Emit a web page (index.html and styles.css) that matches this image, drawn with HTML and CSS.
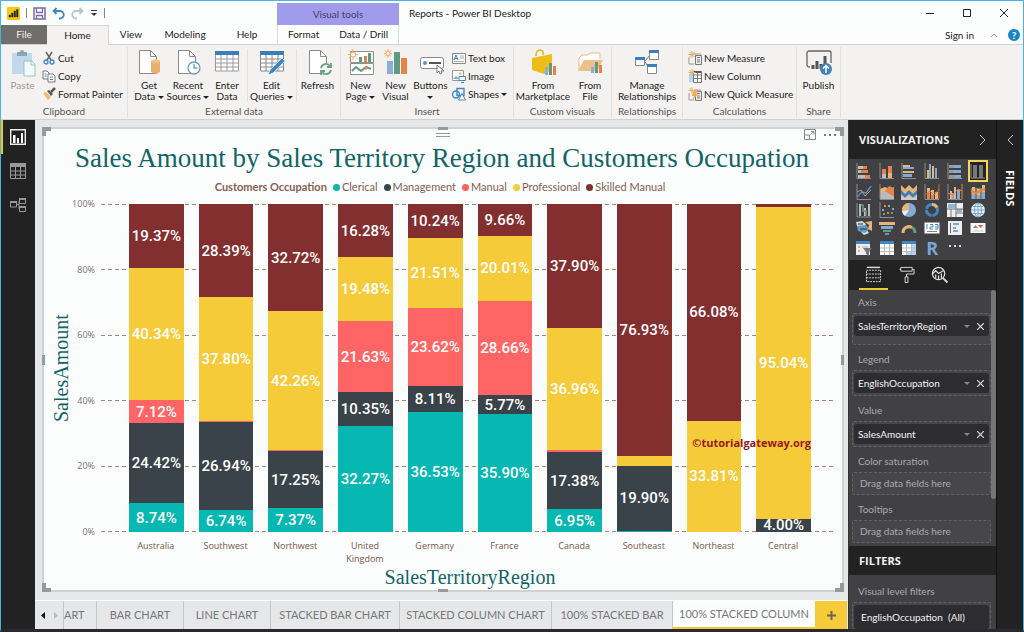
FILE: index.html
```html
<!DOCTYPE html>
<html lang="en">
<head>
<meta charset="utf-8">
<title>Reports - Power BI Desktop</title>
<link rel="stylesheet" href="styles.css">
</head>
<body>
<div class="app">
  <header class="top">
    <div class="quick">
      <svg class="logo" viewBox="0 0 13 13"><rect width="13" height="13" rx="1" fill="#f2c811"/><path d="M2 10V8h1.500v2zM4.500 10V6H6v4zM7 10V4h1.500v6zM9.500 10V2.500H11V10z" fill="#222" stroke="#222" stroke-width=".4"/></svg>
      <span class="bar"></span>
      <button class="plain" aria-label="Save"><svg width="13" height="13" viewBox="0 0 13 13"><path d="M1 1h11v11H1z" fill="#fff" stroke="#7b68a8" stroke-width="1.500"/><path d="M3.500 1v4.500h6V1M3.500 12V8.500h6V12" fill="none" stroke="#7b68a8" stroke-width="1.300"/></svg></button>
      <button class="plain" aria-label="Undo"><svg width="13" height="13" viewBox="0 0 13 13"><path d="M4.500 1L1.500 4l3 3M1.500 4H8a3.500 3.500 0 0 1 0 7.500H7" fill="none" stroke="#3f86c4" stroke-width="1.800"/></svg></button>
      <button class="plain" aria-label="Redo"><svg width="13" height="13" viewBox="0 0 13 13"><path d="M8.500 1l3 3-3 3M11.500 4H5a3.500 3.500 0 0 0 0 7.500h1" fill="none" stroke="#b4c8cf" stroke-width="1.800"/></svg></button>
      <button class="plain" aria-label="Customize toolbar"><svg width="8" height="8" viewBox="0 0 8 8"><path d="M1 1.500h6" stroke="#333"/><path d="M1 4h6L4 7z" fill="#333"/></svg></button>
      <span class="bar"></span>
    </div>
    <div class="context">Visual tools</div>
    <h1 class="wintitle">Reports - Power BI Desktop</h1>
    <div class="winbtns">
      <button class="plain" aria-label="Minimize"><svg width="10" height="10" viewBox="0 0 10 10"><path d="M1 5.500h8" stroke="#222"/></svg></button>
      <button class="plain" aria-label="Maximize"><svg width="10" height="10" viewBox="0 0 10 10"><path d="M1.500 1.500h7v7h-7z" fill="none" stroke="#222"/></svg></button>
      <button class="plain" aria-label="Close"><svg width="10" height="10" viewBox="0 0 10 10"><path d="M1 1l8 8M9 1l-8 8" stroke="#222"/></svg></button>
    </div>
  </header>

  <nav class="tabs">
    <button class="tab file">File</button>
    <button class="tab home">Home</button>
    <button class="tab view">View</button>
    <button class="tab modeling">Modeling</button>
    <button class="tab help">Help</button>
    <div class="ctxtabs"><button class="tab">Format</button><button class="tab">Data / Drill</button></div>
    <div class="account">
      <button class="plain">Sign in</button>
      <svg width="8" height="6" viewBox="0 0 8 6"><path d="M1 5l3-3 3 3" fill="none" stroke="#999"/></svg>
      <button class="qmark" aria-label="Help center">?</button>
    </div>
  </nav>

  <section class="ribbon">
    <div class="group g-clip">
      <div class="tools">
        <button class="big paste"><svg viewBox="0 0 28 28"><path d="M3 4h20v21H3z" fill="#c3d8ec"/><path d="M8 3h3a2 2 0 0 1 4 0h3v4H8z" fill="#8ba5b4"/><path d="M15 12h8l3 3v12H15z" fill="#f1fbfa" stroke="#9cc5bd"/><path d="M22 12v4h4" fill="none" stroke="#9cc5bd"/></svg><span>Paste</span></button>
        <div class="stack">
          <button class="small"><svg viewBox="0 0 14 14"><path d="M4 1l5 8M10 1L5 9" stroke="#666" stroke-width="1.500"/><circle cx="4" cy="11" r="2" fill="none" stroke="#3f86c4" stroke-width="1.300"/><circle cx="10" cy="11" r="2" fill="none" stroke="#3f86c4" stroke-width="1.300"/></svg>Cut</button>
          <button class="small"><svg viewBox="0 0 14 14"><path d="M1 2h4l2 2v6H1z" fill="#fff" stroke="#777"/><path d="M6 5h5l2 2v6H6z" fill="#fff" stroke="#777"/><path d="M2.500 5h2M2.500 7h2M8 8h3M8 10.500h3" stroke="#3f86c4"/></svg>Copy</button>
          <button class="small"><svg viewBox="0 0 14 14"><path d="M1 6l3-1 5 5-3 3z" fill="#eeb978"/><path d="M5 4l2-1 4 4-2 2z" fill="#555"/><path d="M9 5l4-4" stroke="#555" stroke-width="2.500"/></svg>Format Painter</button>
        </div>
      </div>
      <div class="gname">Clipboard</div>
    </div>
    <div class="group g-ext">
      <div class="tools">
        <button class="big"><svg viewBox="0 0 28 28"><path d="M4.500 1.500h11l6 6v17h-17z" fill="#fff" stroke="#8a8a8a"/><path d="M15.500 1.500v6h6" fill="none" stroke="#8a8a8a"/><path d="M16 12v11q4.500 3 9 0V12z" fill="#e8b06c"/><ellipse cx="20.500" cy="12" rx="4.500" ry="1.800" fill="#f1c48c"/></svg><span>Get<br>Data <i class="dd"></i></span></button>
        <button class="big"><svg viewBox="0 0 28 28"><path d="M4.500 1.500h11l6 6v17h-17z" fill="#fff" stroke="#8a8a8a"/><path d="M15.500 1.500v6h6" fill="none" stroke="#8a8a8a"/><circle cx="20" cy="19" r="6" fill="#fff" stroke="#6a9ccc" stroke-width="1.300"/><path d="M20 15v4h3.500" fill="none" stroke="#6a9ccc" stroke-width="1.300"/></svg><span>Recent<br>Sources <i class="dd"></i></span></button>
        <button class="big"><svg viewBox="0 0 28 28"><path d="M2.500 4v18h23V4M2.500 10h23M2.500 14h23M2.500 18h23M8 6v16M14 6v16M20 6v16" fill="#fff" stroke="#9a9a9a"/><path d="M2 2h24v4H2z" fill="#3b7fba"/></svg><span>Enter<br>Data</span></button>
        <button class="big sep"><svg viewBox="0 0 28 28"><path d="M2.500 4v18h23V4M2.500 10h23M2.500 14h23M2.500 18h23M8 6v16M14 6v16M20 6v16" fill="#fff" stroke="#888"/><path d="M2 2h24v4H2z" fill="#3b7fba"/><path d="M10 26l2-5L24 9l3 3-12 12z" fill="#3f86c4" stroke="#fff" stroke-width=".6"/></svg><span>Edit<br>Queries <i class="dd"></i></span></button>
        <button class="big refresh"><svg viewBox="0 0 28 28"><path d="M5.500 1.500h11l6 6v17h-17z" fill="#fff" stroke="#8a8a8a"/><path d="M16.500 1.500v6h6" fill="none" stroke="#8a8a8a"/><circle cx="22" cy="20" r="6" fill="#f5f4f2"/><path d="M17 19a5 5 0 0 1 9-2M27 21a5 5 0 0 1-9 2M27 14v4h-4M17 26v-4h4" fill="none" stroke="#68a08c" stroke-width="1.800"/></svg><span>Refresh</span></button>
      </div>
      <div class="gname">External data</div>
    </div>
    <div class="group g-ins">
      <div class="tools">
        <button class="big"><svg viewBox="0 0 28 28"><path d="M3.500 2.500h23v11h-23zM3.500 14.500h23v11h-23z" fill="#fff" stroke="#909090"/><path d="M12 8h3v5h-3zM21 4h3v9h-3z" fill="#5c9c87"/><path d="M17 7h3v6h-3z" fill="#e48448"/><path d="M5 22l4-4 5 4 5-4 5 2" fill="none" stroke="#5c9c87" stroke-width="2"/><path d="M17 19l2-2 2 2-2 2z" fill="#e48448"/><path d="M6 0v11M1 5.500h10M2 1.500l8 8M10 1.500l-8 8" stroke="#edac5d"/><circle cx="6" cy="5.500" r="2.500" fill="#fff" stroke="#edac5d"/></svg><span>New<br>Page <i class="dd"></i></span></button>
        <button class="big"><svg viewBox="0 0 28 28"><path d="M5 12h6v13H5z" fill="#8badd6"/><path d="M12 3h6v22h-6z" fill="#5c9c87"/><path d="M19 9h6v16h-6z" fill="#e48448"/><path d="M6 0v9M2 4.500h8M3 1.500l6 6M9 1.500l-6 6" stroke="#edac5d"/><circle cx="6" cy="4.500" r="2" fill="#fff" stroke="#edac5d"/></svg><span>New<br>Visual</span></button>
        <button class="big"><svg viewBox="0 0 28 28"><rect x="3.500" y="8.500" width="23" height="11" rx="2" fill="#fff" stroke="#888"/><circle cx="8" cy="14" r="2" fill="#5d91cc"/><path d="M12 14h12" stroke="#555" stroke-width="2"/><path d="M20 16v8l2-2 1 3 2-1-1-2h3z" fill="#fff" stroke="#777"/></svg><span>Buttons<br><i class="dd"></i></span></button>
        <div class="stack">
          <button class="small"><svg viewBox="0 0 14 14"><path d="M.5 2.500h13v10H.5z" fill="#fff" stroke="#888"/><path d="M2 9l2-5 2 5M3 7.500h2" fill="none" stroke="#3f86c4"/><path d="M8 5h4M8 7h4M2 10.500h10" stroke="#aaa"/></svg>Text box</button>
          <button class="small"><svg viewBox="0 0 14 14"><path d="M.5 1.500h11v10H.5z" fill="#fff" stroke="#999"/><path d="M1 10l3-3 3 3z" fill="#7aaedb"/><circle cx="8" cy="4.500" r="1.300" fill="#f0b768"/><path d="M7 7.500h6.500v4H7zM9 13.500h3" fill="#fff" stroke="#3f86c4"/></svg>Image</button>
          <button class="small"><svg viewBox="0 0 14 14"><circle cx="4" cy="7.500" r="3.500" fill="none" stroke="#3f86c4" stroke-width="1.400"/><path d="M5 1.500h7v7H5z" fill="none" stroke="#3f86c4" stroke-width="1.400"/><path d="M10 6.500l3.500 6.500h-7z" fill="#fff" stroke="#3f86c4"/></svg>Shapes <i class="dd"></i></button>
        </div>
      </div>
      <div class="gname">Insert</div>
    </div>
    <div class="group g-cus">
      <div class="tools">
        <button class="big wide"><svg viewBox="0 0 28 28"><path d="M7 7q0-6 4-6t3 5" fill="none" stroke="#e4b21b" stroke-width="1.500"/><path d="M3 9l20-4v16l-8 4-12-4z" fill="#edbe15"/><path d="M16 18h3v8h-3z" fill="#8badd6"/><path d="M20 14h3v12h-3z" fill="#5c9c87"/><path d="M24 17h3v9h-3z" fill="#e48448"/></svg><span>From<br>Marketplace</span></button>
        <button class="big"><svg viewBox="0 0 28 28"><path d="M3 21V9l3-3h6l2-2h10v6" fill="#fff" stroke="#e8bb85"/><path d="M2 22l6-11h19l-6 11z" fill="#edbf89"/><path d="M15 18h3v6h-3z" fill="#8badd6"/><path d="M19 13h3v11h-3z" fill="#5c9c87"/><path d="M23 16h3v8h-3z" fill="#e48448"/></svg><span>From<br>File</span></button>
      </div>
      <div class="gname">Custom visuals</div>
    </div>
    <div class="group g-rel">
      <div class="tools">
        <button class="big wide"><svg viewBox="0 0 28 28"><path d="M12 12l5-6M12 13l4 6" stroke="#777"/><path d="M2.500 9.500h9v7h-9zM16.500 2.500h9v8h-9zM14.500 16.500h9v8h-9z" fill="#fff" stroke="#888"/><path d="M2 8h10v3H2zM16 1h10v3H16zM14 15h10v3H14z" fill="#3b7fba"/></svg><span>Manage<br>Relationships</span></button>
      </div>
      <div class="gname">Relationships</div>
    </div>
    <div class="group g-cal">
      <div class="tools">
        <div class="stack">
          <button class="small"><svg viewBox="0 0 14 14"><path d="M1 6v7h5M6 3h7" fill="none" stroke="#999"/><path d="M7.500 4.500h6v9h-6z" fill="#eee" stroke="#777"/><path d="M9 6.500h3M9 9h3M9 11h3" stroke="#777"/><path d="M4 0v7M.5 3.500h7M1.500 1l5 5M6.500 1l-5 5" stroke="#edac5d"/></svg>New Measure</button>
          <button class="small"><svg viewBox="0 0 14 14"><path d="M1 5h4v8H1z" fill="#b9d3ef"/><path d="M5.500 2.500h8v11h-8zM5.500 6h8M5.500 9.500h8M9.500 2.500v11" fill="#fff" stroke="#777"/><path d="M6 2h7v2H6z" fill="#555"/><path d="M4 0v7M.5 3.500h7M1.500 1l5 5M6.500 1l-5 5" stroke="#edac5d"/></svg>New Column</button>
          <button class="small"><svg viewBox="0 0 14 14"><path d="M1 6v7h5M6 3h7" fill="none" stroke="#999"/><path d="M7.500 4.500h6v9h-6z" fill="#eee" stroke="#777"/><path d="M9 6.500h3M9 9h3M9 11h3" stroke="#777"/><path d="M6 3h4L8 7h2l-6 7 2-5H4z" fill="#edac5d"/><path d="M4 0v7M.5 3.500h7M1.500 1l5 5" stroke="#edac5d"/></svg>New Quick Measure</button>
        </div>
      </div>
      <div class="gname">Calculations</div>
    </div>
    <div class="group g-sha">
      <div class="tools">
        <button class="big"><svg viewBox="0 0 28 28"><path d="M5 18H4a2 2 0 0 1-2-2V4a2 2 0 0 1 2-2h20a2 2 0 0 1 2 2v10" fill="none" stroke="#666" stroke-width="1.300"/><path d="M8 20v-4M12 20v-8M16 20v-5M20 17V7" stroke="#555" stroke-width="3"/><circle cx="21" cy="20" r="6" fill="#4381c0"/><path d="M21 24v-7M18 19.500l3-3 3 3" fill="none" stroke="#fff" stroke-width="1.500"/></svg><span>Publish</span></button>
      </div>
      <div class="gname">Share</div>
    </div>
  </section>

  <div class="work">
    <nav class="rail">
      <button class="railbtn on" aria-label="Report"><svg viewBox="0 0 16 16"><path d="M.7.700h14.600v14.600H.7z" fill="none" stroke="#eee" stroke-width="1.400"/><path d="M3 14V6h2.500v8zM7 14V9h2v5zM11 14V4h2v10z" fill="#fff"/></svg></button>
      <button class="railbtn" aria-label="Data"><svg viewBox="0 0 16 16"><path d="M.5.500h15v15H.5zM.5 8h15M.5 12h15M5.500 4v12M10.500 4v12" fill="none" stroke="#999"/><path d="M0 0h16v4H0z" fill="#999"/></svg></button>
      <button class="railbtn" aria-label="Relationships"><svg viewBox="0 0 16 16"><path d="M.5 5h6v5h-6zM9.500 1.500h6v5h-6zM9.500 9.500h6v5h-6zM7 7.500h2V4M7 7.500h2V12" fill="none" stroke="#999"/><path d="M0 4h7v2H0zM9 1h7v2H9zM9 9h7v2H9z" fill="#999"/></svg></button>
    </nav>

    <main class="center">
      <div class="canvas">
        <article class="visual">
          <i class="h tl"></i><i class="h tr"></i><i class="h bl"></i><i class="h br"></i><i class="h tm"></i><i class="h bm"></i><i class="h lm"></i><i class="h rm"></i>
          <i class="grip"></i>
          <div class="vtools">
            <button class="plain" aria-label="Focus mode"><svg width="12" height="11" viewBox="0 0 12 11"><path d="M.5.500h11v10H.5zM.5 6h5v4.500M6.500 5.500L10 2.500M7 2.500h3v3" fill="none" stroke="#8a8a8a"/></svg></button>
            <button class="plain" aria-label="More options"><svg width="14" height="4" viewBox="0 0 14 4"><path d="M1 1h2v2H1zM6 1h2v2H6zM11 1h2v2h-2z" fill="#777"/></svg></button>
          </div>
          <h2 class="ctitle">Sales Amount by Sales Territory Region and Customers Occupation</h2>
          <div class="legend"><b>Customers Occupation</b><span class="c1">Clerical</span><span class="c2">Management</span><span class="c3">Manual</span><span class="c4">Professional</span><span class="c5">Skilled Manual</span></div>
          <div class="chart">
            <div class="ytitle">SalesAmount</div>
            <div class="yaxis"><span>100%</span><span>80%</span><span>60%</span><span>40%</span><span>20%</span><span>0%</span></div>
            <div class="plot">
              <div class="lines"><i></i><i></i><i></i><i></i><i></i><i></i></div>
              <div class="col"><div class="s5" style="height:19.37%">19.37%</div><div class="s4" style="height:40.34%">40.34%</div><div class="s3" style="height:7.12%">7.12%</div><div class="s2" style="height:24.42%">24.42%</div><div class="s1" style="height:8.74%">8.74%</div></div>
              <div class="col"><div class="s5" style="height:28.39%">28.39%</div><div class="s4" style="height:37.8%">37.80%</div><div class="s3" style="height:.13%"></div><div class="s2" style="height:26.94%">26.94%</div><div class="s1" style="height:6.74%">6.74%</div></div>
              <div class="col"><div class="s5" style="height:32.72%">32.72%</div><div class="s4" style="height:42.26%">42.26%</div><div class="s3" style="height:.4%"></div><div class="s2" style="height:17.25%">17.25%</div><div class="s1" style="height:7.37%">7.37%</div></div>
              <div class="col"><div class="s5" style="height:16.28%">16.28%</div><div class="s4" style="height:19.48%">19.48%</div><div class="s3" style="height:21.63%">21.63%</div><div class="s2" style="height:10.35%">10.35%</div><div class="s1" style="height:32.27%">32.27%</div></div>
              <div class="col"><div class="s5" style="height:10.24%">10.24%</div><div class="s4" style="height:21.51%">21.51%</div><div class="s3" style="height:23.62%">23.62%</div><div class="s2" style="height:8.11%">8.11%</div><div class="s1" style="height:36.53%">36.53%</div></div>
              <div class="col"><div class="s5" style="height:9.66%">9.66%</div><div class="s4" style="height:20.01%">20.01%</div><div class="s3" style="height:28.66%">28.66%</div><div class="s2" style="height:5.77%">5.77%</div><div class="s1" style="height:35.9%">35.90%</div></div>
              <div class="col"><div class="s5" style="height:37.9%">37.90%</div><div class="s4" style="height:36.96%">36.96%</div><div class="s3" style="height:.81%"></div><div class="s2" style="height:17.38%">17.38%</div><div class="s1" style="height:6.95%">6.95%</div></div>
              <div class="col"><div class="s5" style="height:76.93%">76.93%</div><div class="s4" style="height:2.87%"></div><div class="s2" style="height:19.9%">19.90%</div><div class="s1" style="height:.3%"></div></div>
              <div class="col"><div class="s5" style="height:66.08%">66.08%</div><div class="s4" style="height:33.92%">33.81%</div></div>
              <div class="col"><div class="s5" style="height:.96%"></div><div class="s4" style="height:95.04%">95.04%</div><div class="s2" style="height:4%">4.00%</div></div>
              <div class="mark">©tutorialgateway.org</div>
            </div>
            <div class="xaxis"><span>Australia</span><span>Southwest</span><span>Northwest</span><span>United Kingdom</span><span>Germany</span><span>France</span><span>Canada</span><span>Southeast</span><span>Northeast</span><span>Central</span></div>
          </div>
          <div class="xtitle">SalesTerritoryRegion</div>
        </article>
      </div>
      <nav class="pages">
        <div class="arrows"><button class="plain" aria-label="Previous page"><svg width="5" height="7" viewBox="0 0 5 7"><path d="M4 0v7L0 3.500z" fill="#111"/></svg></button><button class="plain" aria-label="Next page"><svg width="5" height="7" viewBox="0 0 5 7"><path d="M1 0v7l4-3.500z" fill="#bbb"/></svg></button></div>
        <button class="page p0">ART</button><button class="page p1">BAR CHART</button><button class="page p1">LINE CHART</button><button class="page p3">STACKED BAR CHART</button><button class="page p4">STACKED COLUMN CHART</button><button class="page p5">100% STACKED BAR</button><button class="page p6 on">100% STACKED COLUMN</button><button class="add" aria-label="New page"><svg width="9" height="9" viewBox="0 0 9 9"><path d="M4.500 0v9M0 4.500h9" stroke="#6b6650" stroke-width="2"/></svg></button>
      </nav>
    </main>

    <aside class="viz">
      <header class="phead"><h3>VISUALIZATIONS</h3><button class="plain" aria-label="Collapse visualizations"><svg width="7" height="12" viewBox="0 0 7 12"><path d="M1 1l5 5-5 5" fill="none" stroke="#ccc"/></svg></button></header>
      <div class="gallery">
        <button aria-label="Stacked bar chart"><svg viewBox="0 0 16 16"><path d="M1 0v15.500h14" class="ax"/><path d="M2 3h5v3H2zM2 7h3v3H2zM2 12h7v3H2z" fill="#b9bec4"/><path d="M7 3h4v3H7zM5 7h7v3H5zM9 12h5v3H9z" class="o"/></svg></button>
        <button aria-label="Stacked column chart"><svg viewBox="0 0 16 16"><path d="M1 0v15.500h14" class="ax"/><path d="M3 9h4v6H3zM9 7h4v8H9z" fill="#b9bec4"/><path d="M3 6h4v5H3zM9 3h4v7H9z" class="o"/><path d="M9 10h4v5H9z" fill="#e6b577"/></svg></button>
        <button aria-label="Clustered bar chart"><svg viewBox="0 0 16 16"><path d="M1 0v15.500h14" class="ax"/><path d="M2 2h7v2H2zM2 8h11v2H2z" class="t"/><path d="M2 4h11v2H2zM2 11h9v3H2z" class="b"/></svg></button>
        <button aria-label="Clustered column chart"><svg viewBox="0 0 16 16"><path d="M1 0v15.500h14" class="ax"/><path d="M3 7h2v8H3zM8 3h2v12H8z" class="t"/><path d="M5 1h2v14H5zM11 5h2v10h-2z" class="b"/></svg></button>
        <button aria-label="100% stacked bar chart"><svg viewBox="0 0 16 16"><path d="M1 0v15.500h14" class="ax"/><path d="M2 2h5v3H2zM2 7h4v3H2zM2 12h6v3H2z" fill="#999"/><path d="M7 2h7v3H7zM6 7h8v3H6zM8 12h6v3H8z" class="b"/></svg></button>
        <button class="sel" aria-label="100% stacked column chart"><svg viewBox="0 0 16 16"><path d="M3 2h4v13H3zM9 2h4v13H9z" fill="#777"/><path d="M1 1v14h14" class="ax"/></svg></button>
        <button aria-label="Line chart"><svg viewBox="0 0 16 16"><path d="M1 0v15.500h14" class="ax"/><path d="M1 13l5-5 4 1 5-7" fill="none" stroke="#5d91cc" stroke-width="1.300"/><path d="M1 8l4-2 4 6 6-6" fill="none" stroke="#a99e94"/></svg></button>
        <button aria-label="Area chart"><svg viewBox="0 0 16 16"><path d="M1 5l5-2 5 2 4-2v10H1z" class="t"/><path d="M5 8l5-6 5 2v9z" class="o"/><path d="M1 9l5-2 9 6v2H1z" fill="#bbb"/><path d="M1 0v15.500h14" class="ax"/></svg></button>
        <button aria-label="Stacked area chart"><svg viewBox="0 0 16 16"><path d="M0 1l4 4 4-4 4 4 4-4v14H0z" class="t"/><path d="M0 6l4 4 4-4 4 4 4-4v4l-4 4-4-4-4 4-4-4z" fill="#3f7fb8"/><path d="M0 11l4 3 4-3 4 3 4-3v5H0z" fill="#ccc"/></svg></button>
        <button aria-label="Line and stacked column"><svg viewBox="0 0 16 16"><path d="M1 0v15.500h14" class="ax"/><path d="M3 4h3v11H3zM7 6h3v9H7zM11 8h3v7h-3z" class="t"/><path d="M3 9h3v6H3zM7 11h3v4H7z" class="o"/><path d="M15 0v15" stroke="#c46a42"/><path d="M1 11l5-4 4 4 5-6" fill="none" stroke="#c46a42"/></svg></button>
        <button aria-label="Line and clustered column"><svg viewBox="0 0 16 16"><path d="M1 0v15.500h14" class="ax"/><path d="M3 7h2v8H3zM7 3h2v12H7z" class="t"/><path d="M5 9h2v6H5zM10 6h3v9h-3z" class="b"/><path d="M15 0v15" stroke="#e38349"/><path d="M1 9l5 2 5-6 4 2" fill="none" stroke="#e38349"/></svg></button>
        <button aria-label="Ribbon chart"><svg viewBox="0 0 16 16"><path d="M1 4h14v11H1z" fill="#887d69"/><path d="M2 3h3v8H2zM7 5h3v6H7zM12 1h3v7h-3z" class="t"/><path d="M2 10h3v5H2zM7 11h3v4H7zM12 8h3v7h-3z" class="b"/><path d="M1 7l5 2 4-2 5-2" stroke="#e38349" fill="none" stroke-width="2"/></svg></button>
        <button aria-label="Waterfall chart"><svg viewBox="0 0 16 16"><path d="M1 1v14h14" class="ax"/><path d="M3 2h2v12H3zM8 6h2v8H8zM12 2h2v12h-2z" fill="#bbb"/><path d="M5 3h2v6h3v4" fill="none" stroke="#659982" stroke-width="1.500"/></svg></button>
        <button aria-label="Scatter chart"><svg viewBox="0 0 16 16"><path d="M1 0v15.500h14" class="ax"/><path d="M3 7h2v2H3zM9 3h2v2H9zM13 6h2v2h-2z" class="b"/><path d="M5 3h2v2H5zM8 10h2v2H8z" class="o"/><path d="M4 11h2v2H4zM12 10h2v2h-2z" fill="#659982"/></svg></button>
        <button aria-label="Pie chart"><svg viewBox="0 0 16 16"><circle cx="8" cy="8" r="7" class="b"/><path d="M8 8V1a7 7 0 0 0-7 8z" class="t"/><path d="M8 8L1 9a7 7 0 0 0 3 5z" fill="#eee"/></svg></button>
        <button aria-label="Donut chart"><svg viewBox="0 0 16 16"><circle cx="8" cy="8" r="5.500" fill="none" stroke="#3f86c4" stroke-width="3" stroke-dasharray="8 1"/><path d="M8 2.500a5.500 5.500 0 0 1 5 3" fill="none" stroke="#e6b577" stroke-width="3"/></svg></button>
        <button aria-label="Treemap"><svg viewBox="0 0 16 16"><path d="M0 1h16v14H0z" fill="#eee"/><path d="M1 2h8v4H1zM10 7h5v3h-5z" fill="#91b5d6"/><path d="M0 7h16M9 1v14M9 11h7M4 7v8" stroke="#777"/></svg></button>
        <button aria-label="Map"><svg viewBox="0 0 16 16"><circle cx="8" cy="8" r="7" fill="#eaf1f6"/><path d="M8 1v14M1 8h14M2.500 4.500h11M2.500 11.500h11" stroke="#73a4cd"/><ellipse cx="8" cy="8" rx="3.500" ry="7" fill="none" stroke="#73a4cd"/></svg></button>
        <button aria-label="Filled map"><svg viewBox="0 0 16 16"><path d="M0 2l6-1 4 3-2 4-3 1-4-3zM6 9l5 1 2 3-5 2-3-3z" fill="#d6dce0"/><path d="M1 6l9-1 3 4-4 4-7-2z" fill="#659ac7"/><path d="M9 2l7-1v10l-4-2 1-4z" class="t"/><path d="M2 4h5M4 9h7" stroke="#333"/></svg></button>
        <button aria-label="Funnel"><svg viewBox="0 0 16 16"><path d="M0 2h16v3H0z" class="t"/><path d="M2 6h12v3H2z" class="b"/><path d="M4 10h8v2H4z" fill="#669982"/><path d="M6 13h4v2H6z" fill="#5d91cc"/></svg></button>
        <button aria-label="Gauge"><svg viewBox="0 0 16 16"><path d="M2 13a6 6 0 0 1 9-5.500" fill="none" stroke="#e6b577" stroke-width="3"/><path d="M11 7.500a6 6 0 0 1 3 5.500" fill="none" stroke="#659982" stroke-width="3"/></svg></button>
        <button aria-label="Card"><svg viewBox="0 0 16 16"><path d="M.5 2.500h15v11H.5z" fill="#fff"/><path d="M3 4v5M6 4.500h3V7H6v2h3M11 4.500h3V9h-3M11 7h3" fill="none" stroke="#4a86be"/><path d="M3 11.500h10" stroke="#888"/></svg></button>
        <button aria-label="Multi-row card"><svg viewBox="0 0 16 16"><path d="M1 1h14v14H1z" fill="#eee"/><path d="M3.500 3v10" stroke="#666"/><path d="M6 4h6M6 8h3M6 11h5" stroke="#5d91cc" stroke-width="1.500"/></svg></button>
        <button aria-label="KPI"><svg viewBox="0 0 16 16"><path d="M.5 3h15v10H.5z" fill="#f7f7f7"/><path d="M3 8l2.500-3L8 8z" fill="#659982"/><path d="M8 5h5l-2.500 3z" fill="#d85f43"/><path d="M3 11h10" stroke="#ccc"/></svg></button>
        <button aria-label="Slicer"><svg viewBox="0 0 16 16"><path d="M0 1h14v14H0z" fill="#eee"/><path d="M0 1h14v3H0z" fill="#3f86c4"/><path d="M2 6h2v2H2zM2 10h2v2H2z" class="t"/><path d="M6 7h6" stroke="#aaa"/><path d="M7 8h9l-3 4v4l-3-2v-2z" fill="#777"/></svg></button>
        <button aria-label="Table"><svg viewBox="0 0 16 16"><path d="M1 1h14v14H1z" fill="#fff"/><path d="M1 8h14M1 11.500h14M5.500 4v11M10.500 4v11" stroke="#bbb"/><path d="M1 1h14v3H1z" fill="#3f86c4"/></svg></button>
        <button aria-label="Matrix"><svg viewBox="0 0 16 16"><path d="M1 1h14v14H1z" fill="#fff"/><path d="M10 4h5v11h-5zM5 11h5v4H5z" fill="#b9d3ef"/><path d="M1 8h14M1 11.500h14M5.500 4v11M10.500 4v11" stroke="#bbb"/><path d="M1 1h14v3H1z" fill="#3f86c4"/></svg></button>
        <button class="r" aria-label="R script visual">R</button>
        <button aria-label="More visuals"><svg viewBox="0 0 16 16"><path d="M2 5h2v2H2zM7 5h2v2H7zM12 5h2v2h-2z" fill="#ddd"/></svg></button>
      </div>
      <div class="vtabs">
        <button class="on" aria-label="Fields"><svg viewBox="0 0 18 18"><path d="M2 1.500h14" stroke="#ddd" stroke-width="1.500"/><path d="M1.500 4.500h15v12h-15zM1.500 8.500h15M1.500 12.500h15" fill="none" stroke="#ddd" stroke-dasharray="2 1"/></svg></button>
        <button aria-label="Format"><svg viewBox="0 0 18 18"><path d="M3 1.500h12v4H3zM3 3.500H1.500M15 3.500h2v5H9v3M7.500 11.500h3v6h-3z" fill="none" stroke="#ddd"/></svg></button>
        <button aria-label="Analytics"><svg viewBox="0 0 18 18"><circle cx="8" cy="8" r="6.500" fill="none" stroke="#ddd" stroke-width="1.300"/><path d="M12.500 12.500l5 5" stroke="#ddd" stroke-width="2"/><path d="M1 9l4-4 3 3 5-3M5 9v4M8 10v4M11 8v5" fill="none" stroke="#ddd" stroke-width="1.300"/></svg></button>
      </div>
      <div class="wells">
        <section><h4>Axis</h4><div class="well tall"><div class="chip">SalesTerritoryRegion<i class="dd"></i><button aria-label="Remove SalesTerritoryRegion"><svg width="7" height="7" viewBox="0 0 7 7"><path d="M0 0l7 7M7 0L0 7" stroke="#ddd" stroke-width="1.200"/></svg></button></div></div></section>
        <section><h4>Legend</h4><div class="well"><div class="chip">EnglishOccupation<i class="dd"></i><button aria-label="Remove EnglishOccupation"><svg width="7" height="7" viewBox="0 0 7 7"><path d="M0 0l7 7M7 0L0 7" stroke="#ddd" stroke-width="1.200"/></svg></button></div></div></section>
        <section><h4>Value</h4><div class="well"><div class="chip">SalesAmount<i class="dd"></i><button aria-label="Remove SalesAmount"><svg width="7" height="7" viewBox="0 0 7 7"><path d="M0 0l7 7M7 0L0 7" stroke="#ddd" stroke-width="1.200"/></svg></button></div></div></section>
        <section><h4>Color saturation</h4><div class="well empty">Drag data fields here</div></section>
        <section><h4>Tooltips</h4><div class="well empty">Drag data fields here</div></section>
        <i class="scroll"></i>
      </div>
      <header class="phead filters"><h3>FILTERS</h3></header>
      <div class="fbody"><h4>Visual level filters</h4><div class="well"><div class="chip">EnglishOccupation&nbsp; (All)</div></div></div>
    </aside>
    <aside class="fields"><button class="plain" aria-label="Expand fields"><svg width="7" height="12" viewBox="0 0 7 12"><path d="M6 1L1 6l5 5" fill="none" stroke="#ccc"/></svg></button><h3>FIELDS</h3></aside>
  </div>
</div>
</body>
</html>
```
FILE: styles.css
```css
* { box-sizing: border-box; }
body { margin: 0; font: 10px/12px Lato, "Open Sans", sans-serif; color: #222; background: #fff; }
h1, h2, h3, h4 { margin: 0; font: inherit; }
button { font: inherit; color: inherit; background: none; border: 0; padding: 0; margin: 0; }
svg { display: block; flex: none; }
.app { display: flex; flex-direction: column; height: 100vh; overflow: hidden; border: 1px solid #4eb1e6; border-bottom: 3px solid #2b2830; background: #fcfdfd; }
.plain { display: flex; align-items: center; }

.top { display: flex; height: 24px; flex: none; }
.quick { display: flex; align-items: center; gap: 6px; width: 276px; padding-left: 6px; }
.logo { width: 13px; height: 13px; }
.bar { width: 1px; height: 10px; background: #888; }
.context { width: 122px; margin-top: 2px; background: #a09ceb; text-align: center; line-height: 22px; color: #44406c; }
.wintitle { flex: 1; padding-left: 10px; line-height: 24px; color: #222; }
.winbtns { display: flex; gap: 27px; align-items: center; padding-right: 14px; }

.tabs { display: flex; height: 20px; flex: none; border-bottom: 1px solid #d2d2d2; }
.tab { text-align: center; line-height: 19px; }
.file { width: 46px; background: #6f6e6b; color: #eee; }
.home { width: 62px; height: 20px; background: #f3f2f1; border: 1px solid #d5d5d5; border-width: 1px 1px 0 0; }
.view { width: 44px; }
.modeling { width: 64px; }
.help { width: 60px; }
.ctxtabs { display: flex; justify-content: space-around; width: 122px; border: 1px solid #ddd; border-width: 0 1px; }
.account { display: flex; align-items: center; gap: 16px; margin-left: auto; padding-right: 3px; }
.qmark { width: 12px; height: 12px; margin-left: -6px; border-radius: 50%; background: #1787c4; color: #fff; font-weight: 700; line-height: 12px; }

.ribbon { display: flex; height: 75px; flex: none; background: #f3f2f1; border-bottom: 1px solid #d0d0d0; }
.group { display: flex; flex-direction: column; justify-content: space-between; margin: 2px 0 1px; border-right: 1px solid #e2e1e0; flex: none; }
.tools { display: flex; justify-content: center; padding-top: 2px; }
.gname { text-align: center; color: #555; line-height: 14px; }
.g-clip { width: 127px; }
.g-ext { width: 213px; }
.g-ins { width: 173px; }
.g-cus { width: 98px; }
.g-rel { width: 71px; }
.g-cal { width: 114px; }
.g-sha { width: 44px; }
.big { display: flex; flex-direction: column; align-items: center; width: 39px; line-height: 11px; white-space: nowrap; gap: 3px; }
.big svg { width: 28px; height: 28px; }
.big.wide { width: 55px; }
.big.sep { width: 50px; border: 1px solid #e2e1e0; border-width: 0 1px; }
.big.refresh { width: 42px; }
.g-ins .big { width: 35px; }
.paste { color: #999; }
.g-clip .tools, .g-ins .tools, .g-cal .tools { justify-content: flex-start; padding-left: 2px; }
.g-cal .tools { padding-left: 5px; }
.stack { display: flex; flex-direction: column; }
.small { display: flex; align-items: center; gap: 2px; height: 18px; white-space: nowrap; }
.small svg { width: 14px; height: 14px; }
.g-ins .stack { padding-left: 4px; }
.dd { display: inline-block; border: 3px solid transparent; border-top-color: currentColor; border-bottom: 0; vertical-align: middle; }

.work { display: flex; flex: 1; min-height: 0; }
.rail { width: 34px; flex: none; background: #222; }
.railbtn { display: flex; width: 34px; height: 34px; align-items: center; justify-content: center; border-left: 2px solid transparent; padding-right: 2px; }
.railbtn.on { border-color: #f2c811; }
.railbtn svg { width: 16px; height: 16px; }

.center { flex: 1; min-width: 0; display: flex; flex-direction: column; background: #e6e7e8; border-right: 1px solid #333; }
.canvas { flex: 1; min-height: 0; padding: 7px 4px 8px 7px; display: flex; }
.visual { position: relative; flex: 1; display: flex; flex-direction: column; min-width: 0; border: 2px solid #d2d2d2; background: #fbfcfc; padding-top: 13px; }
.h { position: absolute; width: 9px; height: 9px; border: 0 solid #969a9b; }
.tl { left: -2px; top: -2px; border-width: 4px 0 0 4px; }
.tr { right: -2px; top: -2px; border-width: 4px 4px 0 0; }
.bl { left: -2px; bottom: -2px; border-width: 0 0 4px 4px; }
.br { right: -2px; bottom: -2px; border-width: 0 4px 4px 0; }
.tm, .bm { width: 10px; height: 3px; left: 50%; margin-left: -5px; background: #969a9b; }
.tm { top: -2px; }
.bm { bottom: -2px; }
.lm, .rm { width: 3px; height: 10px; top: 50%; margin-top: -5px; background: #969a9b; }
.lm { left: -2px; }
.rm { right: -2px; }
.grip { position: absolute; left: 50%; top: 4px; width: 14px; height: 4px; margin-left: -7px; border: 1px solid #999; border-width: 1px 0; }
.vtools { position: absolute; right: 5px; top: 0; display: flex; gap: 7px; }
.ctitle { text-align: center; font: 27px/32px "Liberation Serif", serif; color: #116466; white-space: nowrap; padding-right: 2px; }
.legend { display: flex; justify-content: center; gap: 6px; margin-top: 5px; font-size: 11px; line-height: 16px; color: #85604e; white-space: nowrap; padding-right: 6px; }
.legend b { font-weight: 700; }
.legend span { display: flex; align-items: center; gap: 2px; }
.legend span::before { content: ""; width: 7px; height: 7px; border-radius: 50%; background: currentColor; }
.legend .c1::before { background: #07b7b1; }
.legend .c2::before { background: #374649; }
.legend .c3::before { background: #fd625e; }
.legend .c4::before { background: #f4c93a; }
.legend .c5::before { background: #832f30; }
.chart { flex: 1; min-height: 0; display: grid; grid-template-columns: 20px 24px 1fr; grid-template-rows: 1fr 34px; margin-top: 9px; padding: 0 6px 0 7px; }
.ytitle { writing-mode: vertical-rl; transform: rotate(180deg); font: 20px/20px "Liberation Serif", serif; color: #116466; text-align: center; }
.yaxis { display: flex; flex-direction: column; justify-content: space-between; margin: -6px 0; text-align: right; font: 9px/12px "Open Sans", sans-serif; color: #7a7069; }
.plot { position: relative; display: flex; margin-left: 6px; padding: 0 18px 0 20px; }
.lines { position: absolute; inset: 0; display: flex; flex-direction: column; justify-content: space-between; }
.lines i { height: 1px; background: repeating-linear-gradient(90deg, #ab8674 0 4px, transparent 4px 7px); }
.col { position: relative; flex: 1; padding: 0 7px 0 8px; display: flex; flex-direction: column; }
.col div { display: flex; align-items: center; justify-content: center; color: #fff; font: 500 15px/12px Roboto, sans-serif; }
.s1 { background: #07b7b1; }
.s2 { background: #394349; }
.s3 { background: #ff6564; }
.s4 { background: #f6cb3a; }
.s5 { background: #832f30; }
.mark { position: absolute; right: 25px; bottom: 80px; font: 700 11px/18px "Open Sans", sans-serif; color: #941820; }
.xaxis { grid-column: 3; display: flex; margin-left: 6px; padding: 7px 18px 0 20px; color: #77584a; font: 9px/13px "Open Sans", sans-serif; }
.xaxis span { flex: 1; text-align: center; padding: 0 12px; display: flex; justify-content: center; }
.xtitle { text-align: center; font: 20px/22px "Liberation Serif", serif; color: #116466; padding: 0 0 2px 54px; }

.pages { display: flex; height: 29px; flex: none; border-top: 1px solid #fff; color: #777; font-size: 11px; }
.arrows { display: flex; align-items: center; justify-content: space-around; width: 28px; padding: 0 2px; }
.page { border-left: 1px solid #c6c6c6; white-space: nowrap; overflow: hidden; padding: 0; flex: none; }
.p0 { width: 33px; text-align: left; }
.p1 { width: 87px; }
.p3 { width: 129px; }
.p4 { width: 152px; }
.p5 { width: 121px; }
.p6 { flex: 1; }
.page.on { background: #fcfdfd; border-bottom: 2px solid #f2c836; }
.add { width: 32px; display: flex; align-items: center; justify-content: center; background: #f6cb3a; margin-right: 1px; }

.viz { width: 148px; flex: none; display: flex; flex-direction: column; background: #414143; color: #aaa; border-right: 1px solid #111; }
.phead { display: flex; align-items: center; justify-content: space-between; height: 39px; flex: none; padding: 0 10px; background: #222; color: #f3f3f3; font: 700 11px/14px "Open Sans", sans-serif; }
.gallery { display: grid; grid-template-columns: repeat(6, 1fr); padding: 1px 6px 1px 4px; height: 101px; flex: none; }
.gallery button { display: flex; align-items: center; justify-content: center; }
.gallery svg { width: 16px; height: 16px; }
.gallery .sel { border: 2px solid #f0d45c; background: #222; margin: 0 2px; }
.gallery .r { font: 700 18px/19px "Open Sans", sans-serif; color: #79a5d8; }
.ax { fill: none; stroke: #8b8f92; }
.o { fill: #e38349; }
.t { fill: #e6b577; }
.b { fill: #83a9d5; }
.vtabs { display: flex; height: 30px; flex: none; padding: 0 10px; gap: 4px; background: #222; }
.vtabs button { display: flex; align-items: center; justify-content: center; width: 29px; border-bottom: 2px solid transparent; }
.vtabs .on { border-color: #f2c836; }
.vtabs svg { width: 17px; height: 17px; }
.wells { position: relative; height: 256px; flex: none; padding: 5px 5px 0 3px; display: flex; flex-direction: column; gap: 7px; }
.wells h4, .fbody h4 { padding-left: 6px; line-height: 14px; }
.wells section { display: flex; flex-direction: column; gap: 4px; }
.well { border: 1px dashed #626266; background: #47474b; padding: 2px 1px; border-radius: 2px; }
.well.tall { padding-bottom: 8px; }
.well.empty { padding: 4px 7px; line-height: 13px; }
.chip { display: flex; align-items: center; height: 20px; padding: 0 5px 0 4px; border-radius: 3px; background: #2d2d31; color: #f3f3f3; }
.chip .dd { margin-left: auto; color: #888; }
.chip button { margin-left: 7px; }
.scroll { position: absolute; right: 0; top: 0; width: 5px; height: 209px; border-radius: 3px; background: #757577; }
.filters { height: 29px; }
.fbody { padding: 9px 5px 0 3px; display: flex; flex-direction: column; gap: 4px; }
.fbody .chip { padding-left: 7px; height: 24px; }
.fields { width: 26px; flex: none; display: flex; flex-direction: column; align-items: center; gap: 24px; padding-top: 14px; background: #222; color: #fff; font: 700 11px/14px "Open Sans", sans-serif; }
.fields h3 { writing-mode: vertical-rl; }
```
